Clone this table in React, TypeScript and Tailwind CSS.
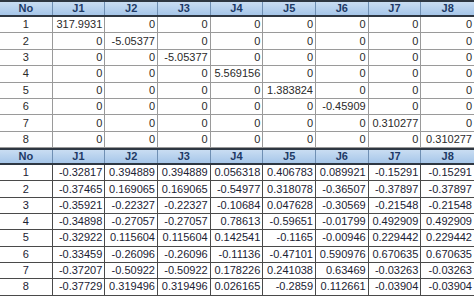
import React from "react";

const heads = ["No", "J1", "J2", "J3", "J4", "J5", "J6", "J7", "J8"];

const t1: string[][] = [
  ["317.9931", "0", "0", "0", "0", "0", "0", "0"],
  ["0", "-5.05377", "0", "0", "0", "0", "0", "0"],
  ["0", "0", "-5.05377", "0", "0", "0", "0", "0"],
  ["0", "0", "0", "5.569156", "0", "0", "0", "0"],
  ["0", "0", "0", "0", "1.383824", "0", "0", "0"],
  ["0", "0", "0", "0", "0", "-0.45909", "0", "0"],
  ["0", "0", "0", "0", "0", "0", "0.310277", "0"],
  ["0", "0", "0", "0", "0", "0", "0", "0.310277"],
];

const t2: string[][] = [
  ["-0.32817", "0.394889", "0.394889", "0.056318", "0.406783", "0.089921", "-0.15291", "-0.15291"],
  ["-0.37465", "0.169065", "0.169065", "-0.54977", "0.318078", "-0.36507", "-0.37897", "-0.37897"],
  ["-0.35921", "-0.22327", "-0.22327", "-0.10684", "0.047628", "-0.30569", "-0.21548", "-0.21548"],
  ["-0.34898", "-0.27057", "-0.27057", "0.78613", "-0.59651", "-0.01799", "0.492909", "0.492909"],
  ["-0.32922", "0.115604", "0.115604", "0.142541", "-0.1165", "-0.00946", "0.229442", "0.229442"],
  ["-0.33459", "-0.26096", "-0.26096", "-0.11136", "-0.47101", "0.590976", "0.670635", "0.670635"],
  ["-0.37207", "-0.50922", "-0.50922", "0.178226", "0.241038", "0.63469", "-0.03263", "-0.03263"],
  ["-0.37729", "0.319496", "0.319496", "0.026165", "-0.2859", "0.112661", "-0.03904", "-0.03904"],
];

function Header({ h }: { h: string }) {
  return (
    <div className={`grid grid-cols-9 ${h} bg-gradient-to-b from-[#c9ddf2] to-[#a6c6e9] border-b-2 border-[#2e3742]`}>
      {heads.map((x, i) => (
        <div
          key={i}
          className={`flex items-center justify-center text-[#1e3a66] font-semibold ${i < 8 ? "border-r border-[#6f8fb3]" : ""}`}
        >
          {x}
        </div>
      ))}
    </div>
  );
}

function Body({ rows, rowH, line, text }: { rows: string[][]; rowH: string; line: string; text: string }) {
  return (
    <div className="flex flex-col bg-white">
      {rows.map((r, ri) => (
        <div key={ri} className={`grid grid-cols-9 ${rowH} border-b ${line}`}>
          <div className={`flex items-center justify-center border-r ${line} ${text}`}>{ri + 1}</div>
          {r.map((v, ci) => (
            <div
              key={ci}
              className={`flex items-center justify-end pr-[2px] ${ci < 7 ? `border-r ${line}` : ""} ${text}`}
            >
              {v}
            </div>
          ))}
        </div>
      ))}
    </div>
  );
}

export default function App() {
  return (
    <div
      className="w-[474px] h-[297px] overflow-hidden bg-white text-[11px] leading-none"
      style={{ fontFamily: '"Liberation Sans", Arial, sans-serif' }}
    >
      <div className="border-t-2 border-[#2e3742]">
        <Header h="h-[15px]" />
        <Body rows={t1} rowH="h-[16.4px]" line="border-[#9a9a9a]" text="text-[#2a2a2a]" />
      </div>
      <div className="border-t-2 border-[#2e3742]">
        <Header h="h-[15px]" />
        <Body rows={t2} rowH="h-[16.3px]" line="border-[#4a4a4a]" text="text-[#1b2233]" />
      </div>
    </div>
  );
}
